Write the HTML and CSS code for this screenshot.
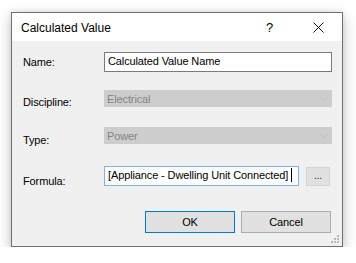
FILE: index.html
```html
<!DOCTYPE html>
<html>
<head>
<meta charset="utf-8">
<link rel="stylesheet" href="styles.css">
</head>
<body>
<div class="window">
  <div class="titlebar">
    <span class="title">Calculated Value</span>
    <span class="help">?</span>
    <svg class="close" width="11" height="11" viewBox="0 0 11 11"><path d="M0.5 0.5 L10.5 10.5 M10.5 0.5 L0.5 10.5" stroke="#111" stroke-width="1" fill="none"/></svg>
  </div>
  <div class="body">
    <div class="row row-name">
      <label class="label">Name:</label>
      <div class="input">Calculated Value Name</div>
    </div>
    <div class="row row-disc">
      <label class="label">Discipline:</label>
      <div class="select">Electrical<svg class="chev" width="9" height="5" viewBox="0 0 9 5"><path d="M0.5 0.5 L4.5 4.5 L8.5 0.5" stroke="#bdbdbd" fill="none"/></svg></div>
    </div>
    <div class="row row-type">
      <label class="label">Type:</label>
      <div class="select">Power<svg class="chev" width="9" height="5" viewBox="0 0 9 5"><path d="M0.5 0.5 L4.5 4.5 L8.5 0.5" stroke="#bdbdbd" fill="none"/></svg></div>
    </div>
    <div class="row row-formula">
      <label class="label">Formula:</label>
      <div class="input input-focus">[Appliance - Dwelling Unit Connected] <span class="caret"></span></div>
      <div class="dots-btn">...</div>
    </div>
    <div class="buttons">
      <div class="btn btn-default">OK</div>
      <div class="btn">Cancel</div>
    </div>
    <div class="grip">
      <i class="g g1"></i><i class="g g2"></i><i class="g g3"></i><i class="g g4"></i><i class="g g5"></i><i class="g g6"></i>
    </div>
  </div>
</div>
</body>
</html>
```
FILE: styles.css
```css
html, body {
  margin: 0;
  padding: 0;
  background: #ffffff;
}
body {
  padding: 12px 0 0 11px;
  font-family: "Liberation Sans", Arial, sans-serif;
  font-size: 11px;
  letter-spacing: -0.12px;
  color: #000;
}
.window {
  width: 330px;
  height: 233px;
  border: 1px solid #6f6f6f;
  background: #f0f0f0;
  box-shadow: 0 5px 14px rgba(0,0,0,0.22), 0 0 6px rgba(0,0,0,0.10);
  display: flex;
  flex-direction: column;
  position: relative;
}
.titlebar {
  height: 28px;
  flex: none;
  background: #fff;
  display: flex;
  align-items: center;
  padding-left: 9px;
}
.title {
  font-size: 12px;
  letter-spacing: 0;
  flex: 1;
  padding-top: 1px;
}
.help {
  font-size: 13px;
  letter-spacing: 0;
  width: 10px;
  margin-right: 37px;
}
.close {
  margin-right: 18px;
}
.body {
  flex: 1;
  padding: 11px 10px 0 11px;
  position: relative;
}
.row {
  display: flex;
  align-items: flex-start;
}
.label {
  width: 81px;
  flex: none;
  line-height: 16px;
  height: 16px;
}
.row-name { height: 20px; }
.row-name .label { margin-top: 2px; }
.row-disc { margin-top: 18px; height: 17px; }
.row-disc .label { margin-top: 4px; }
.row-type { margin-top: 20px; height: 17px; }
.row-type .label { margin-top: 5px; }
.row-formula { margin-top: 22px; height: 20px; }
.row-formula .label { margin-top: 7px; }
.input {
  flex: none;
  width: 223px;
  height: 18px;
  border: 1px solid #7a7a7a;
  background: #fff;
  line-height: 17px;
  padding-left: 3px;
  box-sizing: content-box;
  white-space: nowrap;
  overflow: hidden;
}
.input-focus {
  width: 190px;
  border-color: #7fb5e6;
}
.caret {
  display: inline-block;
  width: 1px;
  height: 14px;
  background: #000;
  vertical-align: -3px;
}
.select {
  flex: none;
  width: 225px;
  height: 17px;
  background: #cdcdcd;
  color: #848484;
  line-height: 16px;
  padding-left: 3px;
  display: flex;
  align-items: center;
  justify-content: space-between;
}
.chev {
  margin-right: 4px;
}
.dots-btn {
  flex: none;
  margin-left: 7px;
  margin-top: 1px;
  width: 22px;
  height: 17px;
  border: 1px solid #d4d4d4;
  background: #e1e1e1;
  font-size: 10px;
  text-align: center;
  line-height: 16px;
  color: #222;
}
.buttons {
  display: flex;
  margin-top: 25px;
  padding-left: 122px;
  gap: 6px;
}
.btn {
  width: 88px;
  height: 20px;
  border: 1px solid #adadad;
  background: #e1e1e1;
  text-align: center;
  line-height: 20px;
}
.btn-default {
  border-color: #0078d7;
}
.grip {
  position: absolute;
  right: 3px;
  bottom: 3px;
  width: 8px;
  height: 8px;
}
.g {
  position: absolute;
  width: 2px;
  height: 2px;
  background: #b9b9b9;
}
.g1 { right: 0; bottom: 0; }
.g2 { right: 3px; bottom: 0; }
.g3 { right: 6px; bottom: 0; }
.g4 { right: 0; bottom: 3px; }
.g5 { right: 3px; bottom: 3px; }
.g6 { right: 0; bottom: 6px; }
```
